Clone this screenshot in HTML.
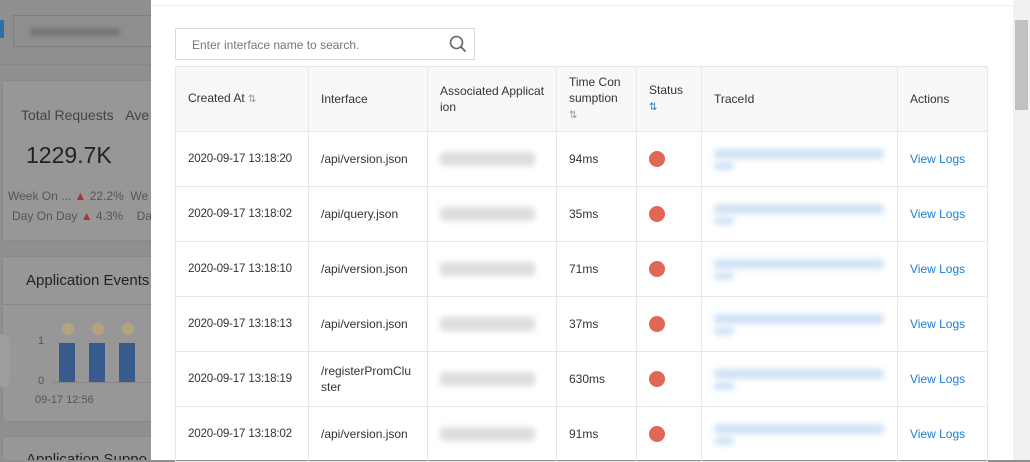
<!DOCTYPE html>
<html><head><meta charset="utf-8"><style>
*{box-sizing:border-box;margin:0;padding:0}
body{width:1030px;height:460px;overflow:hidden;position:relative;font-family:"Liberation Sans",sans-serif;background:#8e8e8e;font-size:12px;color:#333}
.ov{position:absolute;left:0;top:0;width:151px;height:460px;background:#8f8f8f;overflow:hidden}
.card{position:absolute;background:#979797;border:1px solid #8a8a8a}
.drawer{position:absolute;left:151px;top:0;width:879px;height:460px;background:#fff}
.search{position:absolute;left:175px;top:28px;width:300px;height:32px;border:1px solid #d9d9d9}
.search span{position:absolute;left:16px;top:9px;color:#777;font-size:12px}
table{position:absolute;left:175px;top:66px;border-collapse:collapse;table-layout:fixed}
td,th{border:1px solid #e8e8e8;text-align:left;font-weight:normal;padding:0 0 0 12px;font-size:12px;vertical-align:middle;line-height:16px;white-space:nowrap;overflow:hidden}
th{background:#f8f8f8;height:65px;color:#333}
td{height:55px;color:#333}
.dot{width:16px;height:16px;border-radius:50%;background:#e06656}
.link{color:#1a7ed6}
.bl{height:14px;background:#ddd;filter:blur(3px);border-radius:4px}
.bb{background:#cfe2f5;filter:blur(3px);border-radius:4px}
.sort{color:#999;font-size:10px}
.d{font-size:11.6px;letter-spacing:-0.2px}
</style></head><body>
<div class="ov">
<div style="position:absolute;left:0;top:0;width:151px;height:65px;border-bottom:1px solid #888"></div>
<div style="position:absolute;left:0;top:20px;width:4px;height:18px;background:#2f6fa8"></div>
<div style="position:absolute;left:13px;top:15px;width:150px;height:32px;border:1px solid #7d7d7d"></div>
<div style="position:absolute;left:30px;top:28px;width:90px;height:8px;background:#777;filter:blur(2px)"></div>
<div class="card" style="left:2px;top:80px;width:160px;height:161px"></div>
<div style="position:absolute;left:21px;top:107px;font-size:14px;color:#444;white-space:nowrap">Total Requests&nbsp;&nbsp;&nbsp;Ave</div>
<div style="position:absolute;left:26px;top:142px;font-size:23px;color:#222">1229.7K</div>
<div style="position:absolute;left:8px;top:189px;font-size:12px;color:#555;white-space:nowrap">Week On ... <span style="color:#a33">▲</span> 22.2%&nbsp;&nbsp;We</div>
<div style="position:absolute;left:12px;top:209px;font-size:12px;color:#555;white-space:nowrap">Day On Day <span style="color:#a33">▲</span> 4.3%&nbsp;&nbsp;&nbsp;&nbsp;Da</div>
<div class="card" style="left:2px;top:256px;width:160px;height:166px"></div>
<div style="position:absolute;left:2px;top:304px;width:160px;height:1px;background:#888"></div>
<div style="position:absolute;left:26px;top:272px;font-size:15px;color:#222;white-space:nowrap">Application Events</div>
<div style="position:absolute;left:0;top:335px;width:10px;height:52px;background:#9d9d9d;border-radius:0 6px 6px 0"></div>
<div style="position:absolute;left:38px;top:335px;font-size:11px;color:#555">1</div>
<div style="position:absolute;left:38px;top:375px;font-size:11px;color:#555">0</div>
<div style="position:absolute;left:52px;top:382px;width:100px;height:1px;background:#888"></div>
<div style="position:absolute;left:59px;top:343px;width:16px;height:39px;background:#365b8c"></div>
<div style="position:absolute;left:89px;top:343px;width:16px;height:39px;background:#365b8c"></div>
<div style="position:absolute;left:119px;top:343px;width:16px;height:39px;background:#365b8c"></div>
<div style="position:absolute;left:62px;top:323px;width:12px;height:12px;border-radius:50%;background:#b5a37e"></div>
<div style="position:absolute;left:92px;top:323px;width:12px;height:12px;border-radius:50%;background:#b5a37e"></div>
<div style="position:absolute;left:122px;top:323px;width:12px;height:12px;border-radius:50%;background:#b5a37e"></div>
<div style="position:absolute;left:35px;top:394px;font-size:11px;color:#555">09-17 12:56</div>
<div class="card" style="left:2px;top:436px;width:160px;height:40px"></div>
<div style="position:absolute;left:26px;top:451px;font-size:15px;color:#222;white-space:nowrap">Application Suppo</div>
</div>
<div class="drawer">
<div style="position:absolute;left:0;top:5px;width:862px;height:1px;background:#eee"></div>
<div style="position:absolute;left:862px;top:0;width:17px;height:460px;background:#f1f1f1"></div>
<div style="position:absolute;left:864px;top:20px;width:13px;height:90px;background:#c1c1c1"></div>
</div>
<div class="search"><span>Enter interface name to search.</span>
<svg style="position:absolute;left:273px;top:6px" width="18" height="18" viewBox="0 0 18 18"><circle cx="7.5" cy="7.5" r="6" fill="none" stroke="#666" stroke-width="1.6"/><line x1="12" y1="12" x2="16.5" y2="16.5" stroke="#666" stroke-width="1.8"/></svg></div>
<table>
<colgroup><col style="width:133px"><col style="width:119px"><col style="width:129px"><col style="width:80px"><col style="width:65px"><col style="width:196px"><col style="width:90px"></colgroup>
<tr><th>Created At <span class="sort">⇅</span></th><th>Interface</th><th>Associated Applicat<br>ion</th><th>Time Con<br>sumption<br><span class="sort">⇅</span></th><th>Status<br><span class="sort" style="color:#1a7ed6">⇅</span></th><th>TraceId</th><th>Actions</th></tr>
<tr><td class="d">2020-09-17 13:18:20</td><td>/api/version.json</td><td><div class="bl" style="width:95px"></div></td><td>94ms</td><td><div class="dot"></div></td><td><div class="bb" style="width:170px;height:10px"></div><div class="bb" style="width:20px;height:8px;margin-top:3px"></div></td><td class="link">View Logs</td></tr>
<tr><td class="d">2020-09-17 13:18:02</td><td>/api/query.json</td><td><div class="bl" style="width:95px"></div></td><td>35ms</td><td><div class="dot"></div></td><td><div class="bb" style="width:170px;height:10px"></div><div class="bb" style="width:20px;height:8px;margin-top:3px"></div></td><td class="link">View Logs</td></tr>
<tr><td class="d">2020-09-17 13:18:10</td><td>/api/version.json</td><td><div class="bl" style="width:95px"></div></td><td>71ms</td><td><div class="dot"></div></td><td><div class="bb" style="width:170px;height:10px"></div><div class="bb" style="width:20px;height:8px;margin-top:3px"></div></td><td class="link">View Logs</td></tr>
<tr><td class="d">2020-09-17 13:18:13</td><td>/api/version.json</td><td><div class="bl" style="width:95px"></div></td><td>37ms</td><td><div class="dot"></div></td><td><div class="bb" style="width:170px;height:10px"></div><div class="bb" style="width:20px;height:8px;margin-top:3px"></div></td><td class="link">View Logs</td></tr>
<tr><td class="d">2020-09-17 13:18:19</td><td>/registerPromClu<br>ster</td><td><div class="bl" style="width:95px"></div></td><td>630ms</td><td><div class="dot"></div></td><td><div class="bb" style="width:170px;height:10px"></div><div class="bb" style="width:20px;height:8px;margin-top:3px"></div></td><td class="link">View Logs</td></tr>
<tr><td class="d">2020-09-17 13:18:02</td><td>/api/version.json</td><td><div class="bl" style="width:95px"></div></td><td>91ms</td><td><div class="dot"></div></td><td><div class="bb" style="width:170px;height:10px"></div><div class="bb" style="width:20px;height:8px;margin-top:3px"></div></td><td class="link">View Logs</td></tr>
</table>
</body></html>
